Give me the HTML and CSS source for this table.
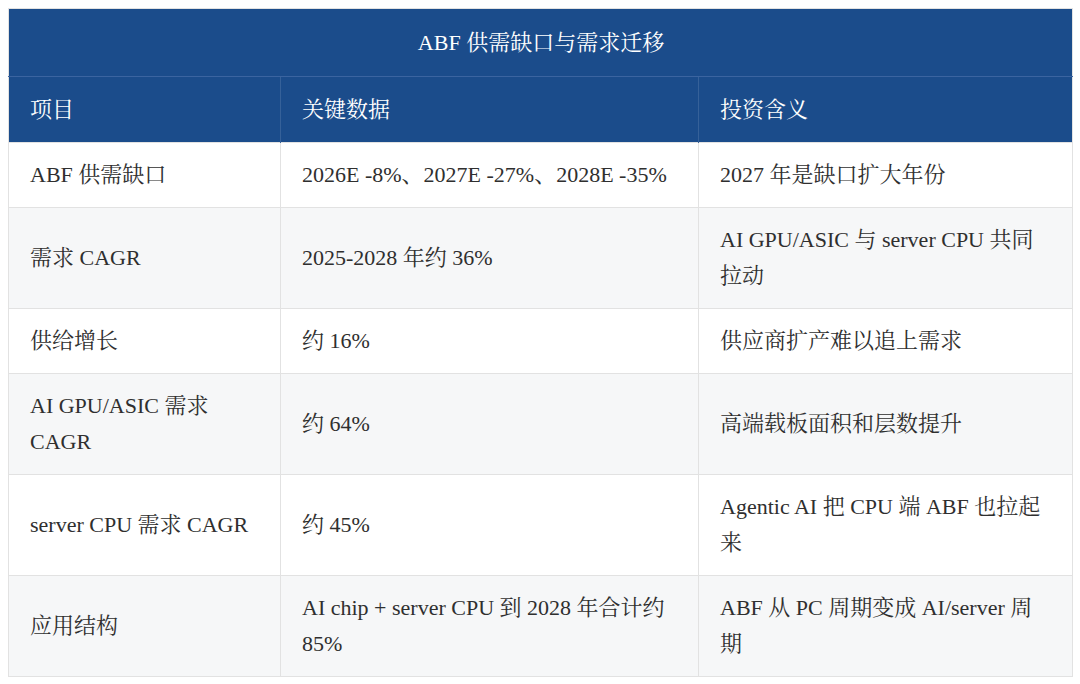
FILE: index.html
```html
<!DOCTYPE html>
<html lang="zh">
<head>
<meta charset="utf-8">
<title>ABF 供需缺口与需求迁移</title>
<link rel="stylesheet" href="styles.css">
</head>
<body>
<table class="tbl">
  <colgroup>
    <col class="c1"><col class="c2"><col class="c3">
  </colgroup>
  <thead>
    <tr class="title-row"><th colspan="3">ABF 供需缺口与需求迁移</th></tr>
    <tr class="head-row"><th>项目</th><th>关键数据</th><th>投资含义</th></tr>
  </thead>
  <tbody>
    <tr><td>ABF 供需缺口</td><td>2026E -8%、2027E -27%、2028E -35%</td><td>2027 年是缺口扩大年份</td></tr>
    <tr><td>需求 CAGR</td><td>2025-2028 年约 36%</td><td>AI GPU/ASIC 与 server CPU 共同拉动</td></tr>
    <tr><td>供给增长</td><td>约 16%</td><td>供应商扩产难以追上需求</td></tr>
    <tr><td>AI GPU/ASIC 需求 CAGR</td><td>约 64%</td><td>高端载板面积和层数提升</td></tr>
    <tr><td>server CPU 需求 CAGR</td><td>约 45%</td><td>Agentic AI 把 CPU 端 ABF 也拉起来</td></tr>
    <tr><td>应用结构</td><td>AI chip + server CPU 到 2028 年合计约 85%</td><td>ABF 从 PC 周期变成 AI/server 周期</td></tr>
  </tbody>
</table>
</body>
</html>
```

FILE: styles.css
```css
html, body {
  margin: 0;
  padding: 0;
  background: #ffffff;
}
body {
  padding: 8px;
  font-family: "Liberation Serif", "Noto Serif CJK SC", "Noto Sans CJK SC", serif;
  color: #333333;
}
.tbl {
  width: 1064px;
  border-collapse: collapse;
  table-layout: fixed;
  font-size: 22px;
  line-height: 36px;
  border: 1px solid #e2e2e2;
}
.c1 { width: 272px; }
.c2 { width: 418px; }
.c3 { width: 374px; }
.tbl th, .tbl td {
  text-align: left;
  vertical-align: middle;
  padding: 14px 20px 14px 21px;
  font-weight: normal;
}
.title-row th {
  background: #1b4c8b;
  color: #ffffff;
  text-align: center;
  padding: 16px 20px 15px 21px;
  border-bottom: 1px solid #3b64a0;
}
.head-row th {
  background: #1b4c8b;
  color: #ffffff;
  padding-top: 15px;
  border-left: 1px solid rgba(255,255,255,0.12);
}
.head-row th:first-child { border-left: none; }
.tbl td {
  border: 1px solid #e2e2e2;
  color: #2f2f2f;
}
.tbl tbody tr:nth-child(even) td {
  background: #f6f7f8;
}
```
